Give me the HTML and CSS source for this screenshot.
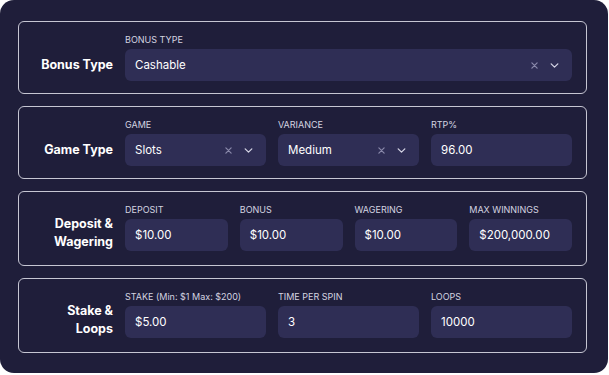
FILE: index.html
```html
<!DOCTYPE html>
<html lang="en">
<head>
    <meta charset="UTF-8">
    <meta name="viewport" content="width=device-width, initial-scale=1.0">
    <title>Bonus Calculator</title>
    <link rel="stylesheet" href="styles.css">
</head>
<body>
    <div class="calc">
        <section class="group">
            <h3 class="group-title">Bonus Type</h3>
            <div class="fields cols-1">
                <div class="field">
                    <label>Bonus Type</label>
                    <div class="input select">
                        <span class="value">Cashable</span>
                        <span class="icons">
                            <svg class="clear" viewBox="0 0 8 8" width="7" height="7"><path d="M1 1L7 7M7 1L1 7"/></svg>
                            <svg class="caret" viewBox="0 0 10 6" width="9" height="5"><path d="M1 1L5 5L9 1"/></svg>
                        </span>
                    </div>
                </div>
            </div>
        </section>

        <section class="group">
            <h3 class="group-title">Game Type</h3>
            <div class="fields cols-3">
                <div class="field">
                    <label>Game</label>
                    <div class="input select">
                        <span class="value">Slots</span>
                        <span class="icons">
                            <svg class="clear" viewBox="0 0 8 8" width="7" height="7"><path d="M1 1L7 7M7 1L1 7"/></svg>
                            <svg class="caret" viewBox="0 0 10 6" width="9" height="5"><path d="M1 1L5 5L9 1"/></svg>
                        </span>
                    </div>
                </div>
                <div class="field">
                    <label>Variance</label>
                    <div class="input select">
                        <span class="value">Medium</span>
                        <span class="icons">
                            <svg class="clear" viewBox="0 0 8 8" width="7" height="7"><path d="M1 1L7 7M7 1L1 7"/></svg>
                            <svg class="caret" viewBox="0 0 10 6" width="9" height="5"><path d="M1 1L5 5L9 1"/></svg>
                        </span>
                    </div>
                </div>
                <div class="field">
                    <label>RTP%</label>
                    <div class="input"><span class="value">96.00</span></div>
                </div>
            </div>
        </section>

        <section class="group tall">
            <h3 class="group-title">Deposit &amp;<br>Wagering</h3>
            <div class="fields cols-4">
                <div class="field">
                    <label>Deposit</label>
                    <div class="input"><span class="value">$10.00</span></div>
                </div>
                <div class="field">
                    <label>Bonus</label>
                    <div class="input"><span class="value">$10.00</span></div>
                </div>
                <div class="field">
                    <label>Wagering</label>
                    <div class="input"><span class="value">$10.00</span></div>
                </div>
                <div class="field">
                    <label>Max Winnings</label>
                    <div class="input"><span class="value">$200,000.00</span></div>
                </div>
            </div>
        </section>

        <section class="group tall">
            <h3 class="group-title">Stake &amp;<br>Loops</h3>
            <div class="fields cols-3">
                <div class="field">
                    <label>Stake <span class="hint">(Min: $1 Max: $200)</span></label>
                    <div class="input"><span class="value">$5.00</span></div>
                </div>
                <div class="field">
                    <label>Time per spin</label>
                    <div class="input"><span class="value">3</span></div>
                </div>
                <div class="field">
                    <label>Loops</label>
                    <div class="input"><span class="value">10000</span></div>
                </div>
            </div>
        </section>
    </div>
</body>
</html>
```

FILE: styles.css
```css
body {
    margin: 0;
    background: #ffffff;
    font-family: Inter, 'Noto Sans', sans-serif;
    color: #ffffff;
}
.calc {
    width: 608px;
    height: 373px;
    box-sizing: border-box;
    padding: 21px 21px 0 18px;
    background: #1f1e3a;
    border-radius: 14px;
    display: flex;
    flex-direction: column;
    gap: 12px;
}
.group {
    display: grid;
    grid-template-columns: 94px 1fr;
    column-gap: 12px;
    align-items: end;
    padding: 12px 14px 12px 0;
    border: 1px solid #c6c6d3;
    border-radius: 6px;
}
.group.tall {
    padding-bottom: 14px;
}
.group-title {
    margin: 0;
    text-align: right;
    font-size: 12.5px;
    font-weight: 700;
    line-height: 18px;
    align-self: end;
    padding-bottom: 7px;
}
.group.tall .group-title {
    padding-bottom: 0;
}
.fields {
    display: grid;
    gap: 12px;
}
.cols-1 { grid-template-columns: 1fr; }
.cols-3 { grid-template-columns: repeat(3, 1fr); }
.cols-4 { grid-template-columns: repeat(4, 1fr); }
.field label {
    display: block;
    font-size: 9px;
    line-height: 11px;
    margin-bottom: 4px;
    text-transform: uppercase;
    color: #d4d4e0;
    white-space: nowrap;
}
.field label .hint {
    text-transform: none;
}
.input {
    height: 32px;
    box-sizing: border-box;
    padding: 0 10px;
    background: #2f2e55;
    border-radius: 6px;
    display: flex;
    align-items: center;
    font-size: 11.5px;
}
.select .value {
    flex: 1;
}
.icons {
    display: flex;
    align-items: center;
    gap: 12px;
    padding-right: 3px;
}
.icons svg {
    fill: none;
    stroke-linecap: round;
    stroke-linejoin: round;
}
.clear {
    stroke: #8a89aa;
    stroke-width: 1.4;
}
.caret {
    stroke: #d6d6e6;
    stroke-width: 1.5;
}
```
